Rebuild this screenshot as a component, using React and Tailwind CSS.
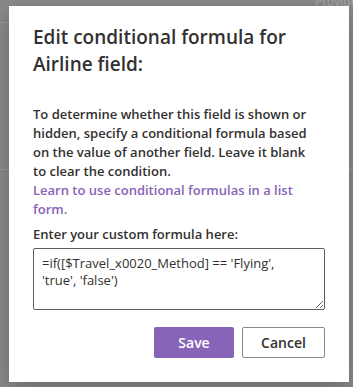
export default function App() {
    return (
        <div
            className="relative h-[387px] w-[353px] overflow-hidden bg-[#8a8a8a]"
            style={{ fontFamily: '"Open Sans", "Noto Sans", sans-serif' }}
        >
            {/* page behind the overlay */}
            <div className="h-[26px] border-b border-[#9a9a9a]">
                <div className="pl-[315px] text-[12px] leading-[10px] text-[#a6a6a6] -mt-[3px] whitespace-nowrap">
                    Provide
                </div>
            </div>
            <div className="mt-[146px] border-t border-[#999]" />

            {/* dialog */}
            <div className="absolute left-[9px] top-[6px] flex h-[376px] w-[340px] flex-col bg-white px-6 pt-[18px] shadow-[0_6px_20px_rgba(0,0,0,0.25)]">
                <h1 className="text-[19px] font-semibold leading-[27px] text-[#323130]">
                    Edit conditional formula for Airline field:
                </h1>

                <div className="mt-[27px] text-[13px] font-semibold leading-[19px]">
                    <p className="pr-[14px] text-[#323130]">
                        To determine whether this field is shown or hidden, specify a conditional
                        formula based on the value of another field. Leave it blank to clear the
                        condition.
                    </p>
                    <a href="#" className="block pr-4 text-[#8764b8]">
                        Learn to use conditional formulas in a list form.
                    </a>
                </div>

                <label className="mt-[6px] text-[13px] font-semibold leading-[19px] text-[#323130]">
                    Enter your custom formula here:
                </label>

                <textarea
                    className="mt-[4px] h-[62px] w-full shrink-0 resize-y rounded-[2px] border border-[#605e5c] py-[6px] pl-2 pr-4 text-[13px] leading-[17px] text-[#323130] outline-none"
                    defaultValue="=if([$Travel_x0020_Method] == 'Flying', 'true', 'false')"
                />

                <div className="mt-[17px] flex justify-end gap-2">
                    <button className="h-[31px] w-[80px] rounded-[2px] bg-[#8764b8] text-[14px] font-semibold text-white">
                        Save
                    </button>
                    <button className="h-[31px] w-[83px] rounded-[2px] border border-[#8a8886] bg-white text-[14px] font-semibold text-[#323130]">
                        Cancel
                    </button>
                </div>
            </div>
        </div>
    );
}
